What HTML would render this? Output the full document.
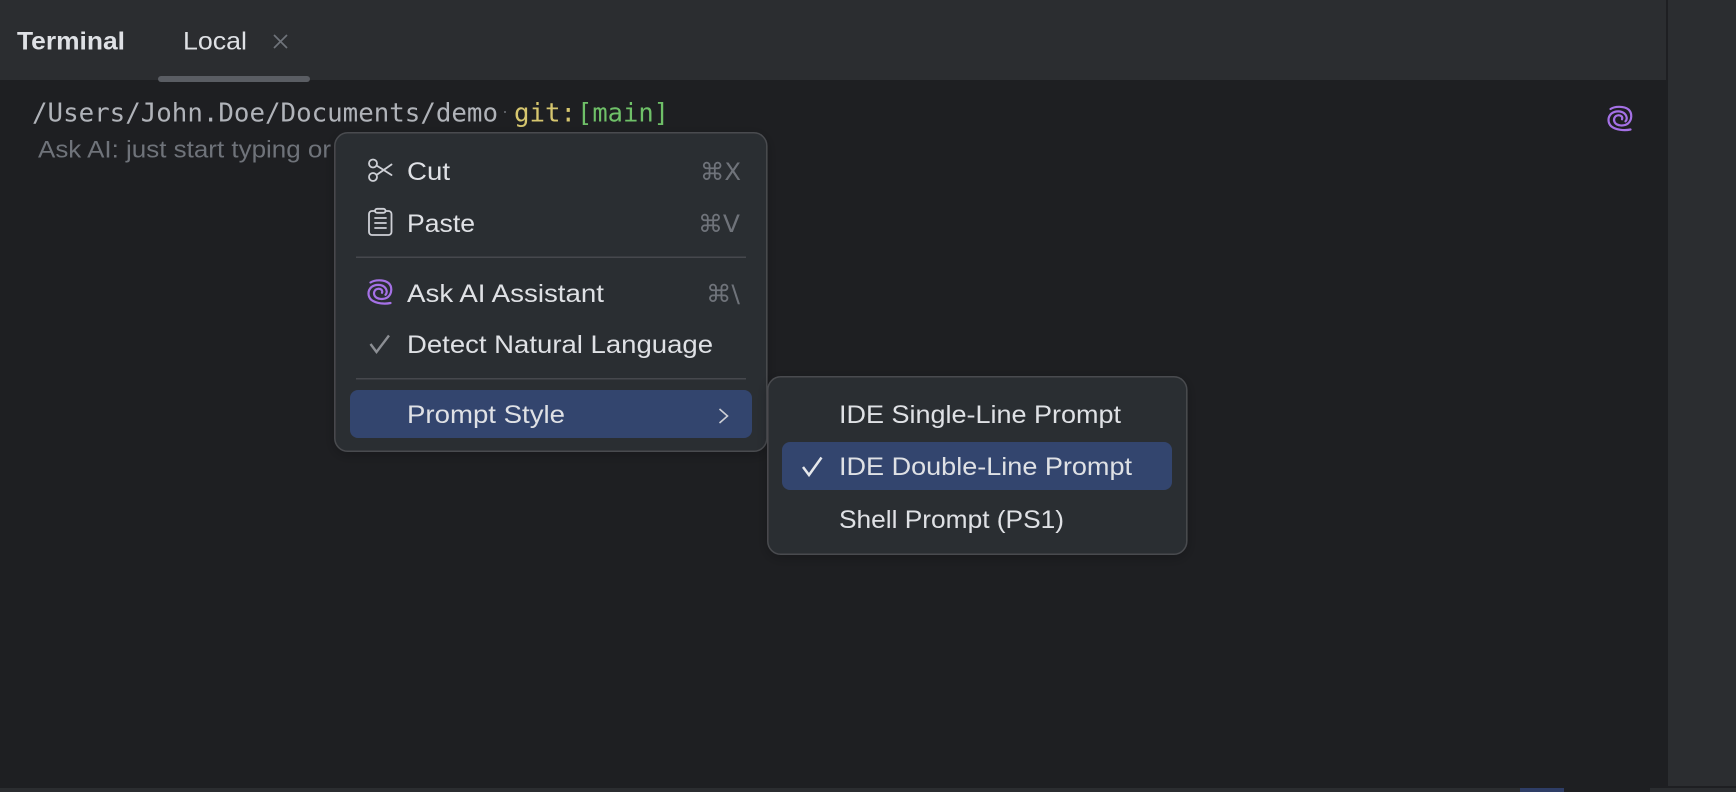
<!DOCTYPE html>
<html>
<head>
<meta charset="utf-8">
<style>
html,body{margin:0;padding:0;width:1736px;height:792px;overflow:hidden;background:#1e1f22}
svg{display:block}
text{font-family:"Liberation Sans",sans-serif;font-size:25px;fill:#dfe1e5}
.m{font-family:"DejaVu Sans Mono","Liberation Mono",monospace;font-size:25.4px}
.s{fill:#6f737a;font-family:"DejaVu Sans","Liberation Sans",sans-serif;font-size:24px}
</style>
</head>
<body>
<svg width="1736" height="792" viewBox="0 0 1736 792" xmlns="http://www.w3.org/2000/svg">
<defs>
<g id="sp" fill="none" stroke="#a571e6" stroke-width="2.200" stroke-linecap="round">
<path d="M2.500 2.500C7 -.5 16 -.5 20.500 3C24.500 6.500 24 13.500 20 17C16 20 9 19.500 6.800 16C5 13 6.500 9.200 10 8.800C13 8.500 15 10.500 14 12.800"/>
<path d="M22.500 23C16.500 24.300 8 23.500 3.500 20C-.5 16.500 -.5 10.500 3.500 7C7 4.300 13 4 16.500 7C19 9.500 19.500 12.800 17.500 14.800"/>
</g>
<filter id="shadow" x="-10%" y="-10%" width="120%" height="120%">
<feDropShadow dx="0" dy="3" stdDeviation="6" flood-color="#000" flood-opacity=".22"/>
</filter>
</defs>

<rect width="1736" height="792" fill="#1e1f22"/>
<rect x="0" y="0" width="1666" height="80" fill="#2b2d30"/>
<rect x="1668" y="0" width="68" height="786" fill="#2b2d30"/>
<rect x="0" y="788" width="1520" height="4" fill="#2b2d30"/>
<rect x="1520" y="788" width="44" height="4" fill="#2e3d66"/>
<rect x="1650" y="788" width="86" height="4" fill="#2b2d30"/>

<text x="17" y="49.500" font-weight="700" textLength="108" lengthAdjust="spacingAndGlyphs">Terminal</text>
<text x="183" y="49.500" textLength="64" lengthAdjust="spacingAndGlyphs">Local</text>
<path d="M274 35L287 48M287 35L274 48" stroke="#6f737a" stroke-width="1.700" fill="none"/>
<rect x="158" y="76" width="152" height="6" rx="3" fill="#5a5d63"/>

<text class="m" x="32" y="121.500" style="fill:#b0b3b9" textLength="466" lengthAdjust="spacingAndGlyphs">/Users/John.Doe/Documents/demo</text>
<circle cx="505" cy="112" r="1" fill="#6f737a"/>
<text class="m" x="514" y="121.500" style="fill:#d6c66f" textLength="62" lengthAdjust="spacingAndGlyphs">git:</text>
<text class="m" x="577" y="121.500" style="fill:#6fc068" textLength="92" lengthAdjust="spacingAndGlyphs">[main]</text>
<text x="38" y="157.500" style="fill:#6f737a;font-size:24px" textLength="293" lengthAdjust="spacingAndGlyphs">Ask AI: just start typing or</text>
<use href="#sp" x="1608" y="106.500"/>

<rect x="334.800" y="132.800" width="432" height="318.500" rx="13" fill="#2b2d30" stroke="#4a4c50" stroke-width="1.500" filter="url(#shadow)"/>

<g fill="none" stroke="#ced0d6" stroke-width="1.800" stroke-linecap="round" stroke-linejoin="round">
<circle cx="373" cy="163.500" r="4"/>
<circle cx="373" cy="177" r="4"/>
<path d="M376.500 165.500L391.500 175M376.500 175L391.500 164.500"/>
<rect x="369" y="211" width="22.500" height="24" rx="3"/>
<rect x="375" y="208.800" width="10.500" height="4" rx="2" fill="#2b2d30"/>
<path d="M375 218H386M375 223H386M375 228H386"/>
</g>
<text x="407" y="180" textLength="43" lengthAdjust="spacingAndGlyphs">Cut</text>
<text class="s" x="700" y="180" textLength="41" lengthAdjust="spacingAndGlyphs">⌘X</text>
<text x="407" y="232" textLength="68" lengthAdjust="spacingAndGlyphs">Paste</text>
<text class="s" x="698" y="232" textLength="42" lengthAdjust="spacingAndGlyphs">⌘V</text>
<rect x="356" y="256.500" width="390" height="1.500" fill="#46484d"/>
<use href="#sp" x="368" y="280"/>
<text x="407" y="302" textLength="197" lengthAdjust="spacingAndGlyphs">Ask AI Assistant</text>
<text class="s" x="706" y="302" textLength="34" lengthAdjust="spacingAndGlyphs">⌘\</text>
<path d="M370.500 344L376.500 352L389 335.500" fill="none" stroke="#8c8f94" stroke-width="2.400"/>
<text x="407" y="353" textLength="306" lengthAdjust="spacingAndGlyphs">Detect Natural Language</text>
<rect x="356" y="378" width="390" height="1.500" fill="#46484d"/>
<rect x="350" y="390" width="402" height="48" rx="8" fill="#33456e"/>
<text x="407" y="423" textLength="158" lengthAdjust="spacingAndGlyphs">Prompt Style</text>
<path d="M719.500 409L727.500 416L719.500 423" fill="none" stroke="#ced0d6" stroke-width="1.600"/>

<rect x="767.800" y="376.800" width="419" height="177.500" rx="13" fill="#2b2d30" stroke="#4a4c50" stroke-width="1.500" filter="url(#shadow)"/>
<rect x="782" y="442" width="390" height="48" rx="8" fill="#33456e"/>
<text x="839" y="423" textLength="282" lengthAdjust="spacingAndGlyphs">IDE Single-Line Prompt</text>
<path d="M803 467L809 475L821.500 457.500" fill="none" stroke="#e6e8ec" stroke-width="2.500"/>
<text x="839" y="475" textLength="293" lengthAdjust="spacingAndGlyphs">IDE Double-Line Prompt</text>
<text x="839" y="528" textLength="225" lengthAdjust="spacingAndGlyphs">Shell Prompt (PS1)</text>
</svg>
</body>
</html>
